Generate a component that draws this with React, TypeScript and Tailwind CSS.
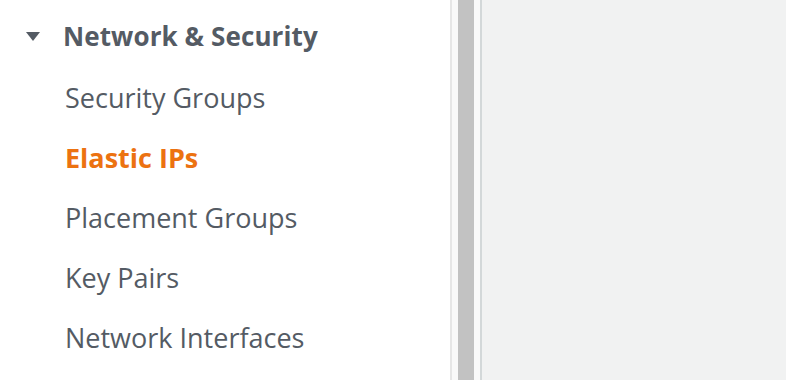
const ITEMS = [
  { label: "Security Groups", active: false },
  { label: "Elastic IPs", active: true },
  { label: "Placement Groups", active: false },
  { label: "Key Pairs", active: false },
  { label: "Network Interfaces", active: false },
];

export default function App() {
  return (
    <div
      className="flex h-[380px] w-[786px] overflow-hidden bg-white"
      style={{ fontFamily: '"Open Sans", "Noto Sans", sans-serif' }}
    >
      <nav className="w-[450px] shrink-0 bg-white pt-[16px]">
        <div className="flex h-[40px] items-center pl-[26px]">
          <svg width="14" height="9" viewBox="0 0 14 9" className="mr-[23px]">
            <path d="M0 0 L14 0 L7 9 Z" fill="#545b64" />
          </svg>
          <span className="text-[26px] font-bold leading-none tracking-[0.1px] text-[#545b64]">
            Network &amp; Security
          </span>
        </div>
        <ul className="mt-[12px] flex flex-col">
          {ITEMS.map((item) => (
            <li
              key={item.label}
              className={
                item.active
                  ? "flex h-[60px] items-center pl-[65px] text-[27px] font-bold text-[#ec7211]"
                  : "flex h-[60px] items-center pl-[65px] text-[27px] text-[#545b64]"
              }
            >
              {item.label}
            </li>
          ))}
        </ul>
      </nav>
      <div className="w-[2px] shrink-0 bg-[#e6e6e6]" />
      <div className="w-[6px] shrink-0 bg-[#f9f9f9]" />
      <div className="w-[16px] shrink-0 bg-[#c2c2c2]" />
      <div className="w-[6px] shrink-0 bg-[#f9f9f9]" />
      <div className="w-[2px] shrink-0 bg-[#d3d8d9]" />
      <main className="flex-1 bg-[#f1f2f2]" />
    </div>
  );
}
